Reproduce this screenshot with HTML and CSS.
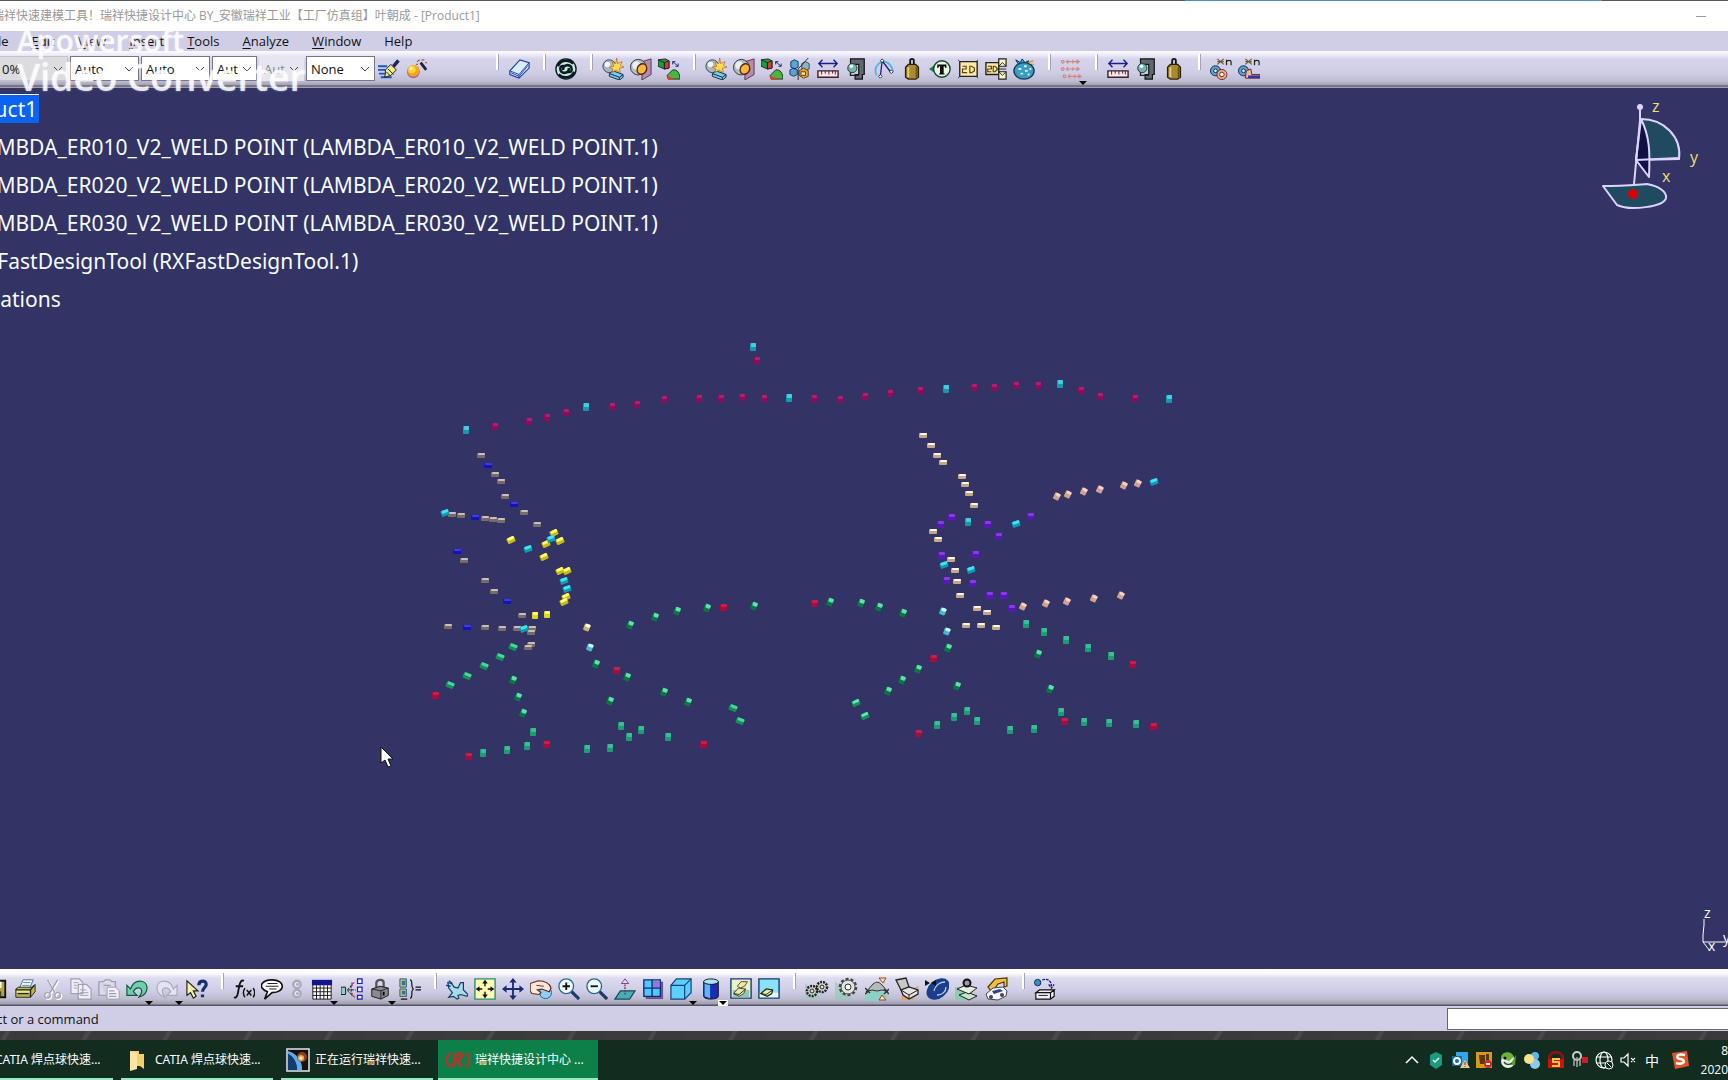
FILE: index.html
```html
<!DOCTYPE html>
<html lang="zh-CN">
<head>
<meta charset="utf-8">
<title>Product1</title>
<link rel="stylesheet" href="styles.css">
</head>
<body>
<svg class="sprite" aria-hidden="true">
  <symbol id="brush" viewBox="0 0 24 24"><path d="M0 9h10M0 13h8M1 17h10M3 21h12" stroke="#1458c8" stroke-width="2"/><path d="M8 13l6-6 6 6-6 6-7 2 1-3z" fill="#f4e98c" stroke="#111"/><path d="M11 12l6 6M9 15l4 4" stroke="#111"/><path d="M16 8l5-6 2 2-5 6z" fill="#1a2a80" stroke="#112"/></symbol>
  <symbol id="wand" viewBox="0 0 24 24"><circle cx="8" cy="15" r="7" fill="#b05c98"/><circle cx="8" cy="14" r="6.500" fill="#f0a81c"/><circle cx="6.500" cy="12.500" r="4" fill="#fcd83c"/><circle cx="5.500" cy="11.500" r="1.500" fill="#fffbc0"/><path d="M16 5l6 8" stroke="#223" stroke-width="3"/><path d="M12 4l3-2M17 2h3M21 5h2M13 7l-2 0" stroke="#b05050" stroke-width="1.300"/></symbol>
  <symbol id="eraser" viewBox="0 0 24 24"><path d="M2 14L13 2l10 3v6L12 22l-10-4z" fill="#d8ecff" stroke="#1c3f9c" stroke-width="1.300"/><path d="M2 14l10 4L23 5M12 18v4M3 16l9 4L22 8" fill="none" stroke="#1c3f9c"/></symbol>
  <symbol id="swirl" viewBox="0 0 24 24"><circle cx="12" cy="12" r="11" fill="#c4ece0" stroke="#0b1b22" stroke-width="1.500"/><path d="M3 9C6 2 15 1 20 6M9 13c-1-6 8-7 9-2 1 3-1 5-4 4M21 15c-3 7-12 8-17 3M15 11c1 6-8 7-9 2-1-3 1-5 4-4" fill="none" stroke="#0b1b22" stroke-width="2.800"/></symbol>
  <symbol id="clash" viewBox="0 0 24 24"><circle cx="8" cy="9" r="7" fill="#aab8c4" stroke="#345"/><circle cx="6" cy="7" r="3" fill="#eef4f8"/><path d="M8 17l4-3 11 4v3l-4 3-11-4z" fill="#74cde0" stroke="#124"/><path d="M8 17l11 4 4-3M19 21v3" fill="none" stroke="#124"/><path d="M16 0l1 6 5-2-2 4 4 2-5 1 1 5-5-3-4 3 1-4-4-2 5-1-2-4 4 1z" fill="#ffdc50" stroke="#b85c14" stroke-width=".7"/></symbol>
  <symbol id="section" viewBox="0 0 24 24"><path d="M13 4l10-3v17l-10 6z" fill="#b58db0" stroke="#534"/><circle cx="9" cy="10" r="8.500" fill="#b4bcc4" stroke="#333"/><circle cx="7" cy="8" r="4.500" fill="#e9eef2"/><ellipse cx="13" cy="12" rx="5" ry="6" transform="rotate(30 13 12)" fill="#ffb638" stroke="#4a2a10" stroke-width="1.500"/></symbol>
  <symbol id="distance" viewBox="0 0 24 24"><path d="M0 2l8-1 4 2v8l-5 1-7-3z" fill="#1d9c3c" stroke="#222"/><path d="M7 5l5-2v8l-5 1z" fill="#d43a3a" stroke="#222"/><path d="M0 2l7 3v7" fill="none" stroke="#222"/><path d="M16 4l6 5M16 4v3M16 4h3M22 9v-3M22 9h-3" stroke="#1c1c7c" fill="none"/><path d="M10 19l6-6c5-1 8 4 8 10H11z" fill="#48b83c" stroke="#222"/><path d="M10 20l7 3h-6z" fill="#e03c2c" stroke="#e03c2c"/></symbol>
  <symbol id="compare" viewBox="0 0 24 24"><path d="M2 4l4-2 4 2v6l-4 2-4-2zM1 13l4-2 4 2v5l-4 2-4-2z" fill="#5aa4d8" stroke="#135"/><path d="M14 6l4-2 4 2v6l-4 2-4-2z" fill="#8cb4c4" stroke="#346"/><path d="M11 14l5-3 5 3v6l-5 2-5-3z" fill="#f2aa2c" stroke="#532"/><path d="M13 15h5v4h-5z" fill="#ffe08a" stroke="#532"/><path d="M21 0L10 12v12" stroke="#222" fill="none"/></symbol>
  <symbol id="measure" viewBox="0 0 24 24"><path d="M2 6h20M6 2L2 6l4 4M18 2l4 4-4 4" fill="none" stroke="#1c1c8c" stroke-width="1.500"/><path d="M1 14h22v7H1z" fill="#ffe2e0" stroke="#3a2030" stroke-width="1.500"/><path d="M5 14v4M9 14v3M13 14v4M17 14v3M20 14v4" stroke="#3a2030"/></symbol>
  <symbol id="clamp" viewBox="0 0 24 24"><path d="M6 1h15v17h-2v5h-8v-5h4V7H6z" fill="#606870" stroke="#111" stroke-width="1.300"/><path d="M3 13h3v6h9" fill="none" stroke="#222" stroke-width="1.500"/><circle cx="8" cy="11" r="5" fill="#78b4ac" stroke="#233"/><circle cx="7" cy="9" r="2" fill="#dff"/></symbol>
  <symbol id="arc" viewBox="0 0 24 24"><path d="M4 19C-1 8 11 0 17 6c4 4 5 8 4 10" fill="none" stroke="#52b7d8" stroke-width="2"/><path d="M10 3L8 20M10 3l9 12" stroke="#1c1c7c" stroke-width="1.400"/><path d="M8 22l-2-2 2-2 2 2zM20 17l-2-2 2-2 2 2zM10 5L8 3l2-2 2 2z" fill="#fff" stroke="#222"/></symbol>
  <symbol id="weight" viewBox="0 0 24 24"><path d="M10 7V3a2 2 0 014 0v4" fill="none" stroke="#111" stroke-width="2"/><path d="M5 10l3-3h8l3 3v11l-3 2H8l-3-2z" fill="#a98a32" stroke="#2a2008" stroke-width="1.500"/><path d="M8 10v11" stroke="#e7cf7c" stroke-width="2"/><path d="M17 10v11" stroke="#6a5414" stroke-width="2"/></symbol>
  <symbol id="textnote" viewBox="0 0 24 24"><path d="M0 12l6-4v8z" fill="#157a50"/><circle cx="14" cy="12" r="9" fill="#e9f8d8" stroke="#123c34" stroke-width="1.500"/><path d="M9 7h10v4h-1l-1-2h-1v8h1v1h-6v-1h1V9h-1l-1 2H9z" fill="#0a0a0a"/></symbol>
  <symbol id="view2d" viewBox="0 0 24 24"><path d="M1 2l22 20M23 2L1 22" stroke="#2a3ab0"/><path d="M3 4h19v16H3z" fill="#ffe6a8" stroke="#222" stroke-width="1.500"/><path d="M6 9h4v3H6v4h5M14 9v7h2l3-2v-3l-3-2z" fill="none" stroke="#5a4608" stroke-width="1.300"/></symbol>
  <symbol id="sheet2d" viewBox="0 0 24 24"><path d="M1 5h14v13H1z" fill="#ffe6a8" stroke="#222" stroke-width="1.500"/><path d="M3 9h4v3H3v3h4M9 9v6h2l2-2v-2l-2-2z" fill="none" stroke="#5a4608" stroke-width="1.300"/><path d="M15 1h8v8h-8zM15 15h8v8h-8z" fill="#fff4c8" stroke="#222" stroke-width="1.300"/><path d="M15 9l4-4 4 4M15 15l4 4 4-4M13 12h10" fill="none" stroke="#222"/></symbol>
  <symbol id="bag" viewBox="0 0 24 24"><path d="M6 7L3 2l5 3 2-4 3 4 4-2-2 5z" fill="#46aed0" stroke="#124"/><path d="M17 5l5-2M17 7h6" stroke="#d89a30" stroke-width="1.500"/><ellipse cx="12" cy="14" rx="11" ry="9" fill="#3a9cc4" stroke="#123a58" stroke-width="1.500"/><path d="M6 12h3M12 9h3M13 14h3M8 17h3M16 18h2M18 12h2" stroke="#d8fff4" stroke-width="2"/></symbol>
  <symbol id="grid" viewBox="0 0 24 24"><g fill="none" stroke="#d08a80" stroke-width="1.300"><path d="M7 4h14M9 2L7 4l2 2M18 2l3 2-3 2M7 12h14M9 10l-2 2 2 2M18 10l3 2-3 2M9 20h14M11 18l-2 2 2 2M20 18l3 2-3 2"/><circle cx="3" cy="4" r="1.500"/><circle cx="3" cy="12" r="1.500"/><circle cx="5" cy="20" r="1.500"/><path d="M14 2v4M14 10v4M16 18v4"/></g></symbol>
  <symbol id="gearsn" viewBox="0 0 24 24"><path d="M8 1l7 6M15 1L8 7M8 4h7" stroke="#6a5a30" stroke-width="1.300"/><path d="M18 8V2M18 4c1-2 5-2 5 0v4" fill="none" stroke="#222" stroke-width="1.300"/><circle cx="6" cy="14" r="5.500" fill="#54a4d4" stroke="#124"/><circle cx="6" cy="14" r="2" fill="#e0f4ff" stroke="#124"/><circle cx="13" cy="18" r="5.500" fill="#f0ac84" stroke="#622"/><circle cx="13" cy="18" r="2.500" fill="#fff" stroke="#622"/></symbol>
  <symbol id="gearsl" viewBox="0 0 24 24"><path d="M8 1l7 6M15 1L8 7M8 4h7" stroke="#6a5a30" stroke-width="1.300"/><path d="M18 8V2M18 4c1-2 5-2 5 0v4" fill="none" stroke="#222" stroke-width="1.300"/><circle cx="6" cy="14" r="5.500" fill="#54a4d4" stroke="#124"/><circle cx="6" cy="14" r="2" fill="#e0f4ff" stroke="#124"/><path d="M8 22l1-8 5-2 1 6h9v4z" fill="#f0b894" stroke="#622"/><path d="M11 19h13v3H11z" fill="#3434a8"/></symbol>
  <symbol id="save" viewBox="0 0 24 24"><path d="M3 3h18v18H3z" fill="#b6a23a" stroke="#111" stroke-width="2"/><path d="M7 4h10v7H7z" fill="#fff"/><path d="M8 15h8v6H8z" fill="#fff" stroke="#111"/></symbol>
  <symbol id="print" viewBox="0 0 24 24"><path d="M6 11l4-9h11l-4 9z" fill="#fff" stroke="#3c6aa0"/><path d="M10 5h8M9 8h8" stroke="#3c8ab0"/><path d="M2 12l3-2h15l3-3v8l-5 6H2z" fill="#bdb84a" stroke="#222"/><path d="M2 13h16v8M18 13l4-5M4 17h12" fill="none" stroke="#222" stroke-width="1.500"/><path d="M3 14h14v2H3z" fill="#e8e68e"/></symbol>
  <symbol id="cut" viewBox="0 0 24 24"><g fill="none" stroke="#fff" stroke-width="2" transform="translate(1 1)"><path d="M6 2l8 14M17 2L9 16"/><circle cx="6" cy="19" r="3"/><circle cx="17" cy="19" r="3"/></g><g fill="none" stroke="#a4a2b4" stroke-width="1.500"><path d="M6 2l8 14M17 2L9 16"/><circle cx="6" cy="19" r="3"/><circle cx="17" cy="19" r="3"/></g></symbol>
  <symbol id="copy" viewBox="0 0 24 24"><path d="M1 1h9l4 4v12H1zM9 7h9l5 5v11H9z" fill="#efeef8" stroke="#a09eb0" stroke-width="1.300"/><path d="M4 5h5M4 8h4M4 11h4M11 13h7M11 16h9M11 19h9" stroke="#a09eb0"/></symbol>
  <symbol id="paste" viewBox="0 0 24 24"><path d="M1 4h5l2-2h5l2 2h4v6M1 4v15h8" fill="#dcdbea" stroke="#a09eb0" stroke-width="1.500"/><path d="M10 10h9l4 4v9H10z" fill="#f2f1fa" stroke="#a09eb0"/><path d="M6 8h8M12 14h6M12 17h8M12 20h8" stroke="#a09eb0" stroke-width="1.300"/></symbol>
  <symbol id="undo" viewBox="0 0 24 24"><path d="M1 8v11h11l-4-4c3-6 10-5 9 0 0 3-2 4-3 6 7-2 9-7 9-11-1-8-14-10-18 2z" fill="#6cd0a8" stroke="#12583c" stroke-width="1.300"/></symbol>
  <symbol id="redo" viewBox="0 0 24 24"><path d="M23 8v11H12l4-4c-3-6-10-5-9 0 0 3 2 4 3 6-7-2-9-7-9-11 1-8 14-10 18 2z" fill="#e4e3f0" stroke="#aaa8ba" stroke-width="1.300"/></symbol>
  <symbol id="help" viewBox="0 0 24 24"><path d="M1 3v16l4-3 3 6 3-2-3-6h5z" fill="#f6f2a4" stroke="#222" stroke-width="1.300"/><path d="M14 8c0-6 8-6 8-1 0 3-4 4-4 8M18 18v3" fill="none" stroke="#123070" stroke-width="3.500"/></symbol>
  <symbol id="fx" viewBox="0 0 24 24"><path d="M12 3c-3-1-4 1-5 5L5 18c-1 3-2 4-4 3M3 9h8" fill="none" stroke="#111" stroke-width="2"/><path d="M13 11c-2 3-2 7 0 10M22 11c2 3 2 7 0 10M15 13l5 6M20 13l-5 6" fill="none" stroke="#111" stroke-width="1.600"/></symbol>
  <symbol id="bubble" viewBox="0 0 24 24"><path d="M12 2c15 0 15 14 0 14L4 23l3-8C-5 10 1 2 12 2z" fill="#fff" stroke="#111" stroke-width="1.800"/><path d="M7 6h11M5 9h14M9 12h8" stroke="#111"/></symbol>
  <symbol id="ghost" viewBox="0 0 24 24"><g fill="#e8e7f3" stroke="#aaa8ba" stroke-width="2.500"><circle cx="12" cy="7" r="4"/><circle cx="12" cy="17" r="4"/><path d="M11 7h3M11 17h3M12 11v2"/></g></symbol>
  <symbol id="table" viewBox="0 0 24 24"><path d="M2 4h20v19H2z" fill="#fff" stroke="#111"/><path d="M2 11h20M2 15h20M2 19h20M6 8v15M10 8v15M14 8v15M18 8v15" stroke="#111"/><path d="M1 2h22v6H1z" fill="#14148c"/></symbol>
  <symbol id="tree" viewBox="0 0 24 24"><path d="M0 10h5v8H0z" fill="#8cd4c8" stroke="#111"/><path d="M7 13l8-9M7 13h9M7 14l8 7M11 8v10" stroke="#111" stroke-dasharray="3 1"/><path d="M18 1h5v5h-5zM18 10h5v5h-5zM18 19h5v4h-5z" fill="#eef" stroke="#1c1cb0" stroke-width="1.300"/><path d="M12 5v4M12 16v4" stroke="#c03050" stroke-width="1.500"/></symbol>
  <symbol id="lock" viewBox="0 0 24 24"><path d="M8 11V5c1-4 8-4 8 0v6" fill="none" stroke="#555" stroke-width="2.500"/><path d="M3 12l9-3 9 2v8l-8 4-10-3z" fill="#8a8a8c" stroke="#111"/><path d="M3 12l10 2 8-3M13 14v9" fill="none" stroke="#222"/><path d="M16 15v4" stroke="#000" stroke-width="2"/></symbol>
  <symbol id="brace" viewBox="0 0 24 24"><path d="M1 1h7v9H1zM1 12h7v8H1z" fill="#e0c070" stroke="#145a70"/><path d="M3 3h4v5H3zM3 14h4v4H3z" fill="#1e7aa4"/><path d="M12 2c4 0 0 9 4 10-4 1 0 10-4 10M18 10h6M18 13h6M2 23h7" fill="none" stroke="#111" stroke-width="1.300"/></symbol>
  <symbol id="plane" viewBox="0 0 24 24"><path d="M2 5l4 1 3 4 4 1 3-6 3 0 0 8 5 5-1 2-7-2-3 1 1 3-2 1-4-3-5 1 4-5-4-5z" fill="#a4dce8" stroke="#143a6c" stroke-width="1.300"/><path d="M0 8l5 1M3 3l4 3" stroke="#143a6c" stroke-width="1.500"/></symbol>
  <symbol id="fit" viewBox="0 0 24 24"><path d="M1 1h22v22H1z" fill="#fbf9b0" stroke="#2c8c74" stroke-width="1.500"/><path d="M12 3v6M12 15v6M3 12h6M15 12h6" stroke="#111" stroke-width="1.500"/><path d="M12 2l3 4H9zM12 22l3-4H9zM2 12l4-3v6zM22 12l-4-3v6z" fill="#111"/></symbol>
  <symbol id="pan" viewBox="0 0 24 24"><path d="M12 2v20M2 12h20" stroke="#182c74" stroke-width="2"/><path d="M12 0l4 5H8zM12 24l4-5H8zM0 12l5-4v8zM24 12l-5-4v8z" fill="#182c74"/></symbol>
  <symbol id="rotate" viewBox="0 0 24 24"><circle cx="17" cy="16" r="6.500" fill="#8cd0f4" stroke="#1c5c9c"/><path d="M0 6l9-3c6 0 12 2 14 8l-2 4-8-3-5 1 4 3-2 2-8-1-2-3z" fill="#ffe4d8" stroke="#5a2a20" stroke-width="1.200"/><path d="M7 8l8 1M0 6v8" stroke="#5a2a20"/></symbol>
  <symbol id="zoomin" viewBox="0 0 24 24"><path d="M14 14l9 9" stroke="#1c3c6c" stroke-width="3.500"/><circle cx="9" cy="9" r="8" fill="#eefcff" stroke="#2c6c8c" stroke-width="1.500"/><path d="M5 9h8M9 5v8" stroke="#111" stroke-width="2"/></symbol>
  <symbol id="zoomout" viewBox="0 0 24 24"><path d="M14 14l9 9" stroke="#1c3c6c" stroke-width="3.500"/><circle cx="9" cy="9" r="8" fill="#eefcff" stroke="#2c6c8c" stroke-width="1.500"/><path d="M5 9h8" stroke="#111" stroke-width="2"/></symbol>
  <symbol id="normal" viewBox="0 0 24 24"><path d="M1 23l6-9h16l-6 9z" fill="#4cacb4" stroke="#124c5c" stroke-width="1.300"/><path d="M12 18V6" stroke="#7c2c6c" stroke-width="1.500" stroke-dasharray="2 1"/><path d="M12 1l4 5H8z" fill="#eadcf4" stroke="#6c3c84"/></symbol>
  <symbol id="views" viewBox="0 0 24 24"><path d="M4 4h19v19H4z" fill="#74508c"/><path d="M2 2h18v18H2z" fill="#52c8f8" stroke="#0c2c7c" stroke-width="1.500"/><path d="M12 3h7v8h-7z" fill="#9c74d8"/><path d="M11 2v18M2 11h18" stroke="#0c2c7c" stroke-width="1.500"/></symbol>
  <symbol id="cube" viewBox="0 0 24 24"><path d="M1 8l6-7h16v15l-7 7H1z" fill="#5cd0fc" stroke="#14407c" stroke-width="1.300"/><path d="M1 8h15v15M16 8l7-7" fill="none" stroke="#14407c" stroke-width="1.300"/></symbol>
  <symbol id="cyl" viewBox="0 0 24 24"><path d="M4 4v16c0 4 16 4 16 0V4z" fill="#1c2cb4" stroke="#111"/><path d="M5 5v15l6 2V7z" fill="#5cb8f0"/><ellipse cx="12" cy="4" rx="8" ry="3" fill="#a4e4fc" stroke="#111"/></symbol>
  <symbol id="hide" viewBox="0 0 24 24"><path d="M1 1h22v21H1z" fill="#e8f4c8" stroke="#123c6c" stroke-width="1.500"/><path d="M3 13h18v8H3z" fill="#8cc8bc"/><path d="M8 9l4-5h7l-3 5-5 2zM4 17l5-6 8 1-2 5-5 3z" fill="#f2e8a4" stroke="#444"/><path d="M4 17l6 1 7-6" fill="none" stroke="#222"/></symbol>
  <symbol id="swap" viewBox="0 0 24 24"><path d="M1 1h22v21H1z" fill="#8ce0f8" stroke="#123c6c" stroke-width="1.500"/><path d="M2 16h20v5H2z" fill="#e8f8f0"/><path d="M3 17l6-5 7 1-1 4-5 3z" fill="#e8eca4" stroke="#222" stroke-width="1.300"/><path d="M3 17l6 1 7-5" fill="none" stroke="#222"/></symbol>
  <symbol id="gears" viewBox="0 0 24 24"><path d="M0 6l17 16H0z" fill="#94ccb8" opacity=".7"/><g fill="#d8e0d4" stroke="#222"><circle cx="7" cy="14" r="5" stroke-width="2.500" stroke-dasharray="2 1"/><circle cx="17" cy="10" r="5" stroke-width="2.500" stroke-dasharray="2 1"/><circle cx="7" cy="14" r="2"/><circle cx="17" cy="10" r="2"/></g></symbol>
  <symbol id="gear" viewBox="0 0 24 24"><path d="M0 4l18 19H0z" fill="#94ccb8" opacity=".7"/><circle cx="13" cy="10" r="8" fill="#dfe4e0" stroke="#444" stroke-width="2.500" stroke-dasharray="3 2"/><circle cx="13" cy="10" r="7" fill="#dfe4e0" stroke="#444"/><circle cx="13" cy="10" r="3" fill="#fff" stroke="#333"/></symbol>
  <symbol id="terrain" viewBox="0 0 24 24"><path d="M0 16l12-4 12 6-8 6H0z" fill="#8cd0c8"/><path d="M1 15l7-8c4-3 6-2 9 1l6 7-6-2-5 1-5-1z" fill="#b4bcb8" stroke="#333"/><path d="M0 11l5 5M0 17l5-4M19 12l5 5M24 12l-5 5" stroke="#333" stroke-width="1.500"/><path d="M14 1h7l-3 5zM17 18l4 5h-7z" fill="#fce0b8" stroke="#8c4c1c"/></symbol>
  <symbol id="chair" viewBox="0 0 24 24"><path d="M6 23l2-8 16-6-6 14z" fill="#e8a068"/><path d="M1 3l10-2 3 9-8 3z" fill="#c8c8c4" stroke="#222" stroke-width="1.300"/><path d="M6 13l8-3 9 3v4l-9 5-6-4z" fill="#e4e4e0" stroke="#222" stroke-width="1.300"/><path d="M6 13l8 5 9-5M14 18v4" fill="none" stroke="#222"/></symbol>
  <symbol id="ring" viewBox="0 0 24 24"><ellipse cx="13" cy="12" rx="13" ry="9" transform="rotate(-40 13 12)" fill="#1c3c8c"/><path d="M9 14c1-5 5-9 11-9M12 18c5 0 9-3 9-8" fill="none" stroke="#b8d4f4" stroke-width="1.300"/><path d="M0 3l5 3-5 3zM11 3L6 6l5 3z" fill="#111"/></symbol>
  <symbol id="layers" viewBox="0 0 24 24"><path d="M0 10h20l-6 13H0z" fill="#8cccb0"/><path d="M4 18l8-3 10 4-8 4z" fill="#c8e4c8" stroke="#222"/><path d="M2 12l9-4 11 3-8 6z" fill="#e4f0dc" stroke="#222"/><circle cx="12" cy="6" r="3.500" fill="#99a" stroke="#111" stroke-width="2"/></symbol>
  <symbol id="robot" viewBox="0 0 24 24"><path d="M3 10L10 2l12-1v8l-3 1V5l-6 2-6 8z" fill="#f4c03c" stroke="#4c340c" stroke-width="1.200"/><path d="M1 17l7-6 10-1 4 4-1 5-8 4-10-1z" fill="#f4f4fc" stroke="#445"/><path d="M7 14l8-2 3 2-9 3z" fill="#34447c"/><circle cx="6" cy="20" r="2" fill="#445"/><circle cx="17" cy="18" r="2" fill="#445"/></symbol>
  <symbol id="drop" viewBox="0 0 24 24"><circle cx="4" cy="5" r="3.500" fill="#2c94c4" stroke="#124"/><path d="M9 2c7-2 10 2 10 7M16 7l3 4 3-4" fill="none" stroke="#1c1c8c" stroke-width="1.500" stroke-dasharray="3 1"/><path d="M2 16l4-3h16l-4 3zM2 16h16v7H2zM18 16l4-3v7l-4 3" fill="#f0f0f8" stroke="#111" stroke-width="1.300"/><path d="M5 19h10" stroke="#111"/></symbol>
</svg>

<div class="app">
  <header class="titlebar">
    <span>瑞祥快速建模工具！瑞祥快捷设计中心 BY_安徽瑞祥工业【工厂仿真组】叶朝成 - [Product1]</span>
    <button class="minimize" aria-label="Minimize"></button>
  </header>

  <nav class="menubar">
    <button><u>F</u>ile</button><button><u>E</u>dit</button><button><u>V</u>iew</button><button><u>I</u>nsert</button><button><u>T</u>ools</button><button><u>A</u>nalyze</button><button><u>W</u>indow</button><button>Help</button>
  </nav>

  <div class="toolbar toolbar-top">
    <div class="combos">
      <select class="combo combo-opacity" aria-label="Opacity"><option>0%</option></select>
      <select class="combo" aria-label="Line weight"><option>Auto</option></select>
      <select class="combo" aria-label="Line type"><option>Auto</option></select>
      <select class="combo combo-short" aria-label="Symbol"><option>Aut</option></select>
      <select class="combo combo-short" aria-label="Rendering" disabled><option>Aut</option></select>
      <select class="combo" aria-label="Layer"><option>None</option></select>
    </div>
    <button class="tool" aria-label="Painter"><svg><use href="#brush"/></svg></button>
    <button class="tool" aria-label="Wizard"><svg><use href="#wand"/></svg></button>
    <i class="space"></i><i class="sep"></i>
    <button class="tool" aria-label="Erase"><svg><use href="#eraser"/></svg></button>
    <i class="sep"></i>
    <button class="tool" aria-label="Update"><svg><use href="#swirl"/></svg></button>
    <i class="sep"></i>
    <button class="tool" aria-label="Clash"><svg><use href="#clash"/></svg></button>
    <button class="tool" aria-label="Sectioning"><svg><use href="#section"/></svg></button>
    <button class="tool" aria-label="Distance"><svg><use href="#distance"/></svg></button>
    <i class="sep"></i>
    <button class="tool" aria-label="Clash analysis"><svg><use href="#clash"/></svg></button>
    <button class="tool" aria-label="Section analysis"><svg><use href="#section"/></svg></button>
    <button class="tool" aria-label="Band analysis"><svg><use href="#distance"/></svg></button>
    <button class="tool" aria-label="Compare"><svg><use href="#compare"/></svg></button>
    <button class="tool" aria-label="Measure between"><svg><use href="#measure"/></svg></button>
    <button class="tool" aria-label="Measure item"><svg><use href="#clamp"/></svg></button>
    <button class="tool" aria-label="Arc"><svg><use href="#arc"/></svg></button>
    <button class="tool" aria-label="Inertia"><svg><use href="#weight"/></svg></button>
    <button class="tool" aria-label="Annotation"><svg><use href="#textnote"/></svg></button>
    <button class="tool" aria-label="2D view"><svg><use href="#view2d"/></svg></button>
    <button class="tool" aria-label="2D sheet"><svg><use href="#sheet2d"/></svg></button>
    <button class="tool" aria-label="Group"><svg><use href="#bag"/></svg></button>
    <i class="sep"></i>
    <button class="tool drop-mark" aria-label="Grid"><svg><use href="#grid"/></svg></button>
    <i class="sep"></i>
    <button class="tool" aria-label="Measure"><svg><use href="#measure"/></svg></button>
    <button class="tool" aria-label="Caliper"><svg><use href="#clamp"/></svg></button>
    <button class="tool" aria-label="Mass"><svg><use href="#weight"/></svg></button>
    <i class="sep"></i>
    <button class="tool" aria-label="Gears"><svg><use href="#gearsn"/></svg></button>
    <button class="tool" aria-label="Gear rack"><svg><use href="#gearsl"/></svg></button>
  </div>

  <main class="viewport">
    <svg class="scene" id="scene" aria-label="Weld points"></svg>
    <ul class="tree">
      <li class="root"><span>Product1</span></li>
      <li>LAMBDA_ER010_V2_WELD POINT (LAMBDA_ER010_V2_WELD POINT.1)</li>
      <li>LAMBDA_ER020_V2_WELD POINT (LAMBDA_ER020_V2_WELD POINT.1)</li>
      <li>LAMBDA_ER030_V2_WELD POINT (LAMBDA_ER030_V2_WELD POINT.1)</li>
      <li>RXFastDesignTool (RXFastDesignTool.1)</li>
      <li class="apps">Applications</li>
    </ul>
    <svg class="compass" viewBox="0 0 108 112" aria-label="Compass">
      <g stroke="#dcd4ff" stroke-width="2" stroke-linejoin="round">
        <path d="M41 18C64 18 82 36 79 58L36 59z" fill="#1f4a60"/>
        <path d="M41 18C50 36 50 52 49 76L36 59z" fill="#101044"/>
        <path d="M40 8v11L33 94M36 59l43-2" fill="none"/>
        <path d="M3 85C20 85 32 84 47 83c12 2 20 8 19 14-2 9-36 13-49 7z" fill="#1f4a60"/>
      </g>
      <circle cx="40" cy="6" r="3" fill="#dcd4ff"/><circle cx="33" cy="93" r="5" fill="#d80404"/>
      <g class="axis-name"><text x="52" y="11">z</text><text x="90" y="62">y</text><text x="62" y="81">x</text></g>
    </svg>
    <svg class="triad" viewBox="0 0 28 48" aria-label="Axes">
      <path d="M4 12v6l-1 10v7h22M3 35l7 9" fill="none" stroke="#fff"/>
      <g class="triad-name"><text x="4" y="11">z</text><text x="23" y="36">y</text><text x="8" y="44">x</text></g>
    </svg>
    <svg class="pointer" viewBox="0 0 14 22"><path d="M1 1v16l4-3 3 7 3-1-3-7h5z" fill="#fff" stroke="#111"/></svg>
  </main>

  <div class="toolbar toolbar-bottom">
    <button class="tool" aria-label="Save"><svg><use href="#save"/></svg></button>
    <button class="tool" aria-label="Print"><svg><use href="#print"/></svg></button>
    <button class="tool" aria-label="Cut"><svg><use href="#cut"/></svg></button>
    <button class="tool" aria-label="Copy"><svg><use href="#copy"/></svg></button>
    <button class="tool" aria-label="Paste"><svg><use href="#paste"/></svg></button>
    <button class="tool tool-drop" aria-label="Undo"><svg><use href="#undo"/></svg></button>
    <button class="tool tool-drop" aria-label="Redo"><svg><use href="#redo"/></svg></button>
    <button class="tool" aria-label="What's this"><svg><use href="#help"/></svg></button>
    <i class="sep"></i>
    <button class="tool" aria-label="Formula"><svg><use href="#fx"/></svg></button>
    <button class="tool" aria-label="Comment"><svg><use href="#bubble"/></svg></button>
    <button class="tool tool-narrow" aria-label="Check"><svg><use href="#ghost"/></svg></button>
    <button class="tool tool-drop" aria-label="Design table"><svg><use href="#table"/></svg></button>
    <button class="tool" aria-label="Structure"><svg><use href="#tree"/></svg></button>
    <button class="tool tool-drop" aria-label="Lock"><svg><use href="#lock"/></svg></button>
    <button class="tool" aria-label="Equivalent"><svg><use href="#brace"/></svg></button>
    <i class="sep"></i>
    <button class="tool" aria-label="Fly"><svg><use href="#plane"/></svg></button>
    <button class="tool" aria-label="Fit all in"><svg><use href="#fit"/></svg></button>
    <button class="tool" aria-label="Pan"><svg><use href="#pan"/></svg></button>
    <button class="tool" aria-label="Rotate"><svg><use href="#rotate"/></svg></button>
    <button class="tool" aria-label="Zoom in"><svg><use href="#zoomin"/></svg></button>
    <button class="tool" aria-label="Zoom out"><svg><use href="#zoomout"/></svg></button>
    <button class="tool" aria-label="Normal view"><svg><use href="#normal"/></svg></button>
    <button class="tool" aria-label="Multi-view"><svg><use href="#views"/></svg></button>
    <button class="tool tool-drop" aria-label="Isometric"><svg><use href="#cube"/></svg></button>
    <button class="tool tool-drop tool-lit" aria-label="Shading"><svg><use href="#cyl"/></svg></button>
    <button class="tool" aria-label="Hide or show"><svg><use href="#hide"/></svg></button>
    <button class="tool" aria-label="Swap visible space"><svg><use href="#swap"/></svg></button>
    <i class="sep"></i>
    <button class="tool tool-wide" aria-label="Assembly"><svg><use href="#gears"/></svg></button>
    <button class="tool tool-wide" aria-label="Part"><svg><use href="#gear"/></svg></button>
    <button class="tool tool-wide" aria-label="Surface"><svg><use href="#terrain"/></svg></button>
    <button class="tool tool-wide" aria-label="Sheet metal"><svg><use href="#chair"/></svg></button>
    <button class="tool tool-wide" aria-label="Kinematics"><svg><use href="#ring"/></svg></button>
    <button class="tool tool-wide" aria-label="Layout"><svg><use href="#layers"/></svg></button>
    <button class="tool tool-wide" aria-label="Robot"><svg><use href="#robot"/></svg></button>
    <i class="sep"></i>
    <button class="tool" aria-label="Snap"><svg><use href="#drop"/></svg></button>
  </div>

  <footer class="status">
    <span>Select an object or a command</span>
    <input class="command" type="text" aria-label="Command">
  </footer>
  <div class="wallpaper"></div>

  <div class="taskbar">
    <button class="task"><i class="task-icon"></i><span>CATIA 焊点球快速...</span></button>
    <button class="task"><svg class="task-icon" viewBox="0 0 24 24"><path d="M4 3h9v3h5v15l-4-3H7l-3 4z" fill="#f2cf6c"/><path d="M4 3l7 2v16l-7 2z" fill="#fbe4a0"/></svg><span>CATIA 焊点球快速...</span></button>
    <button class="task"><svg class="task-icon" viewBox="0 0 24 24"><path d="M1 1h22v22H1z" fill="#15100e" stroke="#dfe8f4" stroke-width="1.500"/><path d="M2 3C10 5 17 13 16 22h-5C11 15 7 8 2 6z" fill="#5cacec"/><path d="M2 6c6 3 9 9 9 16H2z" fill="#123c70"/><circle cx="16" cy="9" r="5" fill="#8c4416"/><circle cx="15" cy="10" r="3" fill="#f0a860"/><circle cx="15" cy="10" r="1.500" fill="#fff0cc"/></svg><span>正在运行瑞祥快速...</span></button>
    <button class="task task-active"><svg class="task-icon" viewBox="0 0 24 24"><path d="M5 5C-1 9-1 15 4 19M20 5c5 4 4 11-1 14" fill="none" stroke="#b8342a" stroke-width="2.500"/><path d="M7 19L10 6c7-2 8 5 1 6l4 7" fill="none" stroke="#b8342a" stroke-width="3"/></svg><span>瑞祥快捷设计中心 ...</span></button>
    <div class="tray">
      <svg viewBox="0 0 24 24"><path d="M6 15l6-6 6 6" fill="none" stroke="#fff" stroke-width="1.500"/></svg>
      <svg viewBox="0 0 24 24"><path d="M12 4l6 3v10l-6 4-6-4V7z" fill="#1c9a7c"/><path d="M9 12l2 2 4-4" fill="none" stroke="#dff" stroke-width="1.500"/></svg>
      <svg viewBox="0 0 24 24"><path d="M8 4h12v14H8z" fill="#38a4e8"/><path d="M4 8h10v10H4z" fill="#1464b4"/><circle cx="9" cy="13" r="3" fill="none" stroke="#fff" stroke-width="2"/><path d="M17 12l5 8H12z" fill="#f4c888"/><path d="M17 14v3M17 18v1" stroke="#543"/></svg>
      <svg viewBox="0 0 24 24"><path d="M4 4h16v16H4z" fill="#d8981c"/><path d="M7 7h6v9H8zM14 6h3v9h-3z" fill="#5c3410"/><circle cx="16" cy="16" r="4" fill="#d42c1c"/><path d="M14 16h4" stroke="#fff" stroke-width="2"/></svg>
      <svg viewBox="0 0 24 24"><circle cx="12" cy="13" r="7" fill="#e8f4d8"/><path d="M5 10c0-7 11-8 13-1l-5 4z" fill="#6cb43c"/><path d="M14 17l6-10-1 10z" fill="#58a42c"/><circle cx="9" cy="10" r="1.500" fill="#111"/><path d="M8 14c2 3 5 3 8 1" fill="none" stroke="#345" stroke-width="1.500"/></svg>
      <svg viewBox="0 0 24 24"><circle cx="15" cy="8" r="4" fill="#5cb8ec"/><circle cx="15" cy="16" r="5" fill="#8ccaf0"/><circle cx="9" cy="11" r="5" fill="#f8e48c"/></svg>
      <svg viewBox="0 0 24 24"><path d="M5 11c0-9 14-9 14 0" fill="none" stroke="#8c1410" stroke-width="3"/><path d="M4 11h16v9H4z" fill="#c4180c"/><path d="M16 11H9v3h6v4H8" fill="none" stroke="#ffc83c" stroke-width="2"/></svg>
      <svg viewBox="0 0 24 24"><circle cx="9" cy="8" r="4" fill="none" stroke="#ccc" stroke-width="2"/><path d="M9 9v10M6 12v6M12 12v6" stroke="#aaa" stroke-width="1.500"/><path d="M14 9h6v6h-6z" fill="#d01c24"/></svg>
      <svg viewBox="0 0 24 24"><g fill="none" stroke="#fff" stroke-width="1.200"><circle cx="12" cy="12" r="8"/><ellipse cx="12" cy="12" rx="4" ry="8"/><path d="M4 9h16M4 15h16"/></g><circle cx="17" cy="17" r="4" fill="#132c20" stroke="#fff"/><path d="M15 15l4 4" stroke="#fff"/></svg>
      <svg viewBox="0 0 24 24"><path d="M5 10h3l4-4v12l-4-4H5zM15 10l4 4M19 10l-4 4" fill="none" stroke="#fff" stroke-width="1.200"/></svg>
      <span class="ime">中</span>
      <svg class="sogou" viewBox="0 0 24 24"><path d="M4 5l15-2 2 15-14 3z" fill="#e4542c"/><path d="M17 7c-9-2-10 4-4 4 6 2 2 6-5 4" fill="none" stroke="#fff" stroke-width="2.500"/></svg>
      <span class="clock">8<br>2020</span>
    </div>
  </div>
</div>

<div class="watermark"><span>Apowersoft</span><strong>Video Converter</strong></div>
<i class="top-accent"></i>
<script src="scene.js"></script>
</body>
</html>
```

FILE: styles.css
```css
:root {
  --off: 120px;
  --lavender: #d0cee6;
  --ui: "Open Sans", "Noto Sans CJK SC", sans-serif;
}
* { box-sizing: border-box; }
html, body { height: 100%; }
body {
  margin: 0;
  overflow: hidden;
  position: relative;
  font: 13px/20px var(--ui);
  color: #111;
  background: #333366;
}
button { border: 0; background: none; padding: 0; font: inherit; color: inherit; }
.sprite { position: absolute; width: 0; height: 0; }

/* The window is dragged partly past the left edge of the desktop. */
.app {
  display: flex;
  flex-direction: column;
  min-height: 100%;
  margin-left: calc(-1 * var(--off));
}

.titlebar {
  display: flex;
  align-items: center;
  justify-content: space-between;
  height: 31px;
  padding: 0 22px 0 112px;
  border-top: 1px solid #58565c;
  background: #fff;
  color: #999;
  font: 12px/20px "Open Sans", "Noto Sans CJK SC", sans-serif;
  white-space: nowrap;
}
.minimize { width: 10px; height: 1px; background: #999; }

.menubar {
  display: flex;
  gap: 23px;
  height: 20px;
  padding-left: 108px;
  background: var(--lavender);
}
.menubar u { text-underline-offset: 2px; }

.toolbar { display: flex; align-items: center; flex: none; height: 37px; }
.toolbar-top {
  padding: 0 0 2px 119px;
  background: linear-gradient(#fcfcff 0, #f0effa 3px, #d6d4ea 8px, #cfcde6 22px, #bfbdd2 30px, #a3a1b3 34px, #4a485c 35px, #a09eb0 36px);
}
.toolbar-bottom {
  padding: 3px 0 0 103px;
  background: linear-gradient(#fff 0, #fff 4px, #dddbee 9px, #cfcde6 22px, #bebcd0 30px, #a09eb0 35px, #555464 36px);
}
.combos { display: flex; gap: 2px; }
.combo {
  appearance: none;
  width: 69px;
  height: 25px;
  padding: 0 4px;
  border: 1px solid #77758a;
  border-radius: 0;
  color: #111;
  font: 13px/20px var(--ui);
  background: #fff url("data:image/svg+xml,%3Csvg xmlns='http://www.w3.org/2000/svg' width='9' height='6'%3E%3Cpath d='M1 1l4 4 4-4' fill='none' stroke='%23444'/%3E%3C/svg%3E") no-repeat right 5px center;
}
.combo-opacity { background-color: #dcdce0; border-color: #c4c2d0; padding: 0 2px; }
.combo-short { width: 45px; }
.combo:disabled { color: #888; background-color: #e6e5f0; border-color: #e6e5f0; opacity: 1; }

.tool {
  flex: none;
  width: 28px;
  height: 28px;
  display: grid;
  place-items: center;
  position: relative;
}
.tool svg { width: 22px; height: 22px; display: block; fill: none; }
.tool-wide { width: 30px; }
.tool-wide svg { width: 24px; height: 24px; }
.tool-narrow { width: 22px; }
.tool-drop { margin-right: 2px; }
.tool-drop::after, .drop-mark::after {
  content: "";
  position: absolute;
  right: -2px;
  bottom: -2px;
  border: 4px solid transparent;
  border-top-color: #000;
  border-bottom: 0;
}
.tool-lit::before {
  content: "";
  position: absolute;
  right: -3px;
  bottom: -3px;
  width: 10px;
  height: 6px;
  background: #fff;
}
.sep {
  flex: none;
  align-self: flex-start;
  width: 3px;
  height: 16px;
  margin: 3px 6px 0 10px;
  background: linear-gradient(90deg, #fff 66%, #a4a2b4 66%);
}
.toolbar-bottom .sep { margin-top: 1px; }
.space { flex: none; width: 55px; }

.viewport { position: relative; flex: 1; overflow: hidden; background: #333366; }
.scene { position: absolute; top: 0; left: var(--off); width: calc(100% - var(--off)); height: 100%; }
.tree {
  position: relative;
  list-style: none;
  margin: 0;
  padding: 2px 0 0 92px;
  font: 21px/38px "Noto Sans", sans-serif;
  color: #f4fcff;
  white-space: nowrap;
}
.tree .root { margin-left: -24px; }
.tree .apps { margin-left: -32px; }
.tree .root span { display: inline-block; line-height: 28px; padding-right: 2px; background: #0a64f0; border-top: 1px solid #fff; }
.compass { position: absolute; top: 13px; right: 20px; width: 108px; height: 112px; }
.axis-name { fill: #f0e070; font: 16px "Open Sans", sans-serif; }
.triad { position: absolute; right: 0; bottom: 14px; width: 28px; height: 48px; }
.triad-name { fill: #fff; font: 14px "Open Sans", sans-serif; }
.pointer { position: absolute; left: calc(var(--off) + 380px); top: 658px; width: 14px; height: 22px; }

.status {
  display: flex;
  align-items: center;
  justify-content: space-between;
  height: 25px;
  padding-left: 32px;
  background: var(--lavender);
}
.command { width: 281px; height: 22px; border: 1px solid #666478; border-right: 0; background: #fff; }
.wallpaper {
  height: 9px;
  background: repeating-linear-gradient(120deg, #3c3c3c 0 38px, #4a4a4a 40px 42px, #3a3a3a 44px 70px);
}

.taskbar {
  display: flex;
  height: 40px;
  padding-left: 78px;
  background: #132c20;
  color: #fff;
}
.task {
  position: relative;
  display: flex;
  align-items: center;
  gap: 5px;
  width: 160px;
  padding: 0 0 0 8px;
  font: 12px/20px "Noto Sans", "Noto Sans CJK SC", sans-serif;
  white-space: nowrap;
}
.task::after {
  content: "";
  position: absolute;
  left: 3px;
  right: 5px;
  bottom: 0;
  height: 2px;
  background: #98e8c0;
}
.task-icon { width: 24px; height: 24px; flex: none; }
.task-active { background: #0c8048; }
.task-active::after { left: 0; right: 0; }
.tray { display: flex; align-items: center; margin-left: auto; }
.tray svg { width: 24px; height: 24px; fill: none; }
.ime { width: 24px; text-align: center; font: 14px/24px "Noto Sans CJK SC", sans-serif; }
.tray .sogou { margin-left: 4px; }
.clock { width: 36px; text-align: right; font: 12px/19px "Open Sans", sans-serif; }

.watermark {
  position: absolute;
  left: 17px;
  top: 23px;
  display: grid;
  color: rgba(255, 255, 255, .78);
  text-shadow: 0 0 2px rgba(255, 255, 255, .5);
  font: 600 30px/36px "Open Sans", sans-serif;
  white-space: nowrap;
  pointer-events: none;
}
.watermark strong { font-size: 37px; font-weight: 600; }
.top-accent { position: absolute; top: 0; right: 126px; width: 417px; height: 1px; background: #4a90c8; }
```

FILE: scene.js
```js
// Weld points, one list per colour and shape: x, y pairs in desktop pixels.
const TOP = 88;
const groups = [
  { c: "#1898ac", t: "#40d0e0", w: 6, h: 8, p: [466,430,586,407,789,398,946,389,1060,384,1169,399,968,522,753,347] },
  { c: "#900c58", t: "#b81c70", w: 6, h: 7, p: [495,426,529,421,547,417,566,412,612,406,637,404,664,399,699,398,721,398,742,397,764,398,814,398,840,399,865,396,890,393,920,390,974,387,994,387,1016,385,1038,385,1081,390,1100,396,1135,398,757,360] },
  { c: "#786c68", t: "#ccc0b8", w: 8, h: 5, p: [481,455,495,474,501,481,505,496,524,512,537,524,452,514,461,515,485,518,493,519,501,520,464,560,485,580,494,591,522,615,448,626,485,627,502,628,517,628,532,628,531,632,531,644,528,647] },
  { c: "#1414b4", t: "#3c3cf0", w: 8, h: 5, p: [488,465,514,504,475,517,457,551,507,601,467,627] },
  { c: "#c8b818", t: "#fffc70", w: 8, h: 6, r: -25, p: [554,533,511,540,560,541,546,544,544,557,560,571,567,571,566,597,564,602] },
  { c: "#e0d420", t: "#fffc70", w: 6, h: 7, p: [535,615,547,614] },
  { c: "#1098b4", t: "#40e4f4", w: 8, h: 6, r: -20, p: [445,513,551,539,528,549,564,581,567,589,524,629,1154,482,1016,524,944,565,971,570] },
  { c: "#48b8d0", t: "#c8fcff", w: 6, h: 7, r: 20, p: [590,647,943,611,947,631] },
  { c: "#c8b470", t: "#fffce0", w: 6, h: 7, r: 20, p: [587,627] },
  { c: "#209c74", t: "#38c094", w: 6, h: 8, p: [533,732,527,746,507,750,483,753,587,749,610,748,621,726,629,737,641,730,668,737,937,725,954,717,967,711,977,721,1010,730,1034,729,1061,712,1084,722,1109,723,1136,724,1026,624,1044,632,1066,640,1088,648,1111,656] },
  { c: "#087840", t: "#60e0b0", w: 6, h: 8, r: 20, p: [630,625,655,617,677,611,707,608,754,606,596,664,627,677,610,701,664,692,688,702,513,680,518,697,523,713,830,602,861,603,879,607,903,613,948,648,918,669,902,680,888,691,957,686,1038,654,1050,689] },
  { c: "#149058", t: "#48d89c", w: 8, h: 6, r: 22, p: [513,647,500,657,484,666,467,676,450,685,733,708,740,721] },
  { c: "#149058", t: "#60e8b0", w: 8, h: 6, r: -25, p: [856,703,865,716] },
  { c: "#a80c3c", t: "#c82048", w: 7, h: 7, p: [435,695,468,756,546,744,616,670,723,607,703,744,814,603,933,658,918,733,1064,721,1153,726,1132,664] },
  { c: "#c0a888", t: "#fff4e8", w: 8, h: 5, p: [923,435,931,445,937,455,943,462,962,476,965,484,969,493,974,505,933,531,938,539,951,559,955,570,957,581,960,595,977,608,987,612,966,625,981,625,996,627] },
  { c: "#d0a090", t: "#f8d4c0", w: 6, h: 7, r: 25, p: [1057,496,1068,494,1084,491,1100,489,1124,485,1138,483,1023,606,1046,603,1067,601,1094,598,1121,595] },
  { c: "#5818b8", t: "#8c38e8", w: 7, h: 7, p: [951,517,940,524,987,524,998,536,1030,516,941,555,975,554,946,580,972,583,989,595,1003,595,1011,608] }
];

const scene = document.getElementById("scene");
const rect = (x, y, w, h, fill, turn) => {
  const el = document.createElementNS("http://www.w3.org/2000/svg", "rect");
  const attrs = { x, y, width: w, height: h, rx: 1, fill, transform: turn };
  for (const key in attrs) el.setAttribute(key, attrs[key]);
  scene.append(el);
};
for (const g of groups) {
  for (let i = 0; i < g.p.length; i += 2) {
    const x = g.p[i], y = g.p[i + 1] - TOP;
    const turn = `rotate(${g.r || 0} ${x} ${y})`;
    const left = x - Math.floor(g.w / 2), top = y - Math.floor(g.h / 2);
    rect(left, top, g.w, g.h, g.c, turn);
    rect(left + 1, top, g.w - 1, Math.floor(g.h / 2), g.t, turn);
  }
}
```
